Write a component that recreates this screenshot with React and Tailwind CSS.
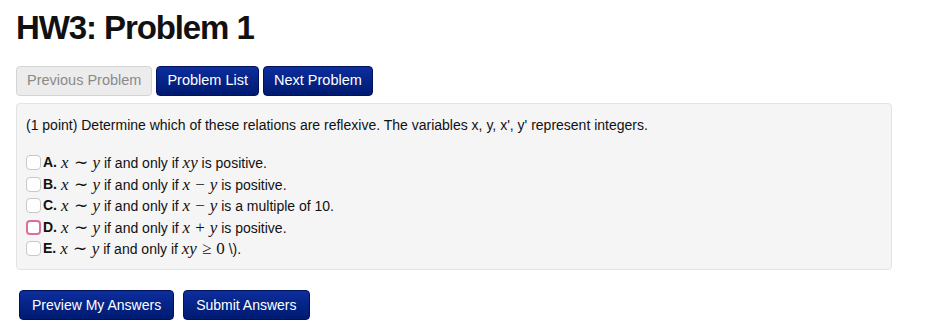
export default function App() {
  const math = "font-['Liberation_Serif','Times_New_Roman',serif] italic text-[17px]";
  const sym = "font-['Liberation_Serif',serif] text-[17px] mx-[5px]";
  const rel = (
    <>
      <span className={math}>x</span>
      <span className={sym}>∼</span>
      <span className={math}>y</span>
    </>
  );
  const options = [
    { letter: "A.", body: <>{rel} if and only if <span className={math}>xy</span> is positive.</> },
    { letter: "B.", body: <>{rel} if and only if <span className={math}>x</span><span className={sym}>−</span><span className={math}>y</span> is positive.</> },
    { letter: "C.", body: <>{rel} if and only if <span className={math}>x</span><span className={sym}>−</span><span className={math}>y</span> is a multiple of 10.</> },
    { letter: "D.", body: <>{rel} if and only if <span className={math}>x</span><span className={sym}>+</span><span className={math}>y</span> is positive.</>, focus: true },
    { letter: "E.", body: <>{rel} if and only if <span className={math}>xy</span><span className={sym}>≥</span><span className="font-['Liberation_Serif',serif] text-[17px]">0</span> \).</> },
  ];
  const blue = "bg-gradient-to-b from-[#0d2e9e] to-[#001a70] border border-[#00135a] text-white rounded-[4px]";

  return (
    <div className="min-h-[333px] bg-white font-['Liberation_Sans',Arial,sans-serif] text-[#111] px-4 pt-[8px]">
      <h1 className="text-[33px] font-bold leading-[40px] tracking-[-1.1px]">HW3: Problem 1</h1>

      <div className="flex gap-1 mt-[18px]">
        <button className="h-[30px] px-[10px] text-[14.5px] rounded-[4px] bg-[#ececec] border border-[#d4d4d4] text-[#8a8a8a]">Previous Problem</button>
        <button className={`h-[30px] px-[10px] text-[14.5px] ${blue}`}>Problem List</button>
        <button className={`h-[30px] px-[10px] text-[14.5px] ${blue}`}>Next Problem</button>
      </div>

      <div className="mt-[7px] w-[876px] h-[167px] bg-[#f5f5f5] border border-[#e3e3e3] rounded-[4px] pl-[9px] pt-[11px] text-[14px]">
        <p className="leading-[20px]">(1 point) Determine which of these relations are reflexive. The variables x, y, x', y' represent integers.</p>
        <div className="mt-[17px] flex flex-col">
          {options.map((o) => (
            <label key={o.letter} className="flex items-center h-[21.5px]">
              <span
                className={`w-[15px] h-[15px] rounded-[4px] bg-white mr-[2px] ${
                  o.focus ? "border-2 border-[#d9709c]" : "border border-[#c8c8c8]"
                }`}
              />
              <span className="font-bold mr-[4px]">{o.letter}</span>
              <span className="whitespace-pre-wrap">{o.body}</span>
            </label>
          ))}
        </div>
      </div>

      <div className="flex gap-[9px] mt-[20px] ml-[3px]">
        <button className={`h-[30px] px-[12px] text-[14px] ${blue}`}>Preview My Answers</button>
        <button className={`h-[30px] px-[12px] text-[14px] ${blue}`}>Submit Answers</button>
      </div>
    </div>
  );
}
